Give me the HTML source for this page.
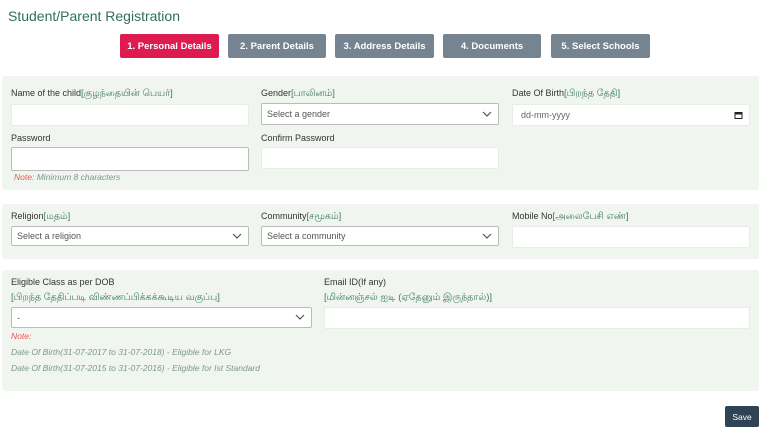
<!DOCTYPE html>
<html><head><meta charset="utf-8"><style>
*{box-sizing:border-box;margin:0;padding:0}
body{width:768px;height:435px;background:#fff;font-family:"Liberation Sans",sans-serif;position:relative;overflow:hidden;color:#333}
.a{position:absolute}
.t{left:8px;top:8px;font-size:14px;color:#2f6f5f}
.b{top:34px;height:24px;border-radius:2px;background:#768491;color:#fff;font-size:9.5px;font-weight:bold;display:flex;align-items:center;justify-content:center}
.p{background:#f1f5ef;left:2px;width:757px;border-radius:3px}
.l{font-size:9px;color:#333;white-space:nowrap}
.l span{color:#3a7a68;font-size:9.5px}
.i{background:#fff;border:1px solid #e8ece6;border-radius:2px;height:22px;font-size:9px;color:#555;padding:0 5px;display:flex;align-items:center}
.s{border-color:#bbb}
.chev{position:absolute;right:6px;top:6px}
.n{font-size:8.5px;font-style:italic;color:#7a9a88;white-space:nowrap}
.n b{color:#e55;font-weight:normal}
</style></head><body>
<div class="a t">Student/Parent Registration</div>
<div class="a b" style="left:120px;width:99px;background:#dd1b50">1. Personal Details</div>
<div class="a b" style="left:228px;width:98px">2. Parent Details</div>
<div class="a b" style="left:335px;width:99px">3. Address Details</div>
<div class="a b" style="left:443px;width:98px">4. Documents</div>
<div class="a b" style="left:551px;width:99px">5. Select Schools</div>

<div class="a p" style="top:76px;height:114px"></div>
<div class="a l" style="left:11px;top:88px">Name of the child<span>[குழந்தையின் பெயர்]</span></div>
<div class="a l" style="left:261px;top:88px">Gender<span>[பாலினம்]</span></div>
<div class="a l" style="left:512px;top:88px">Date Of Birth<span>[பிறந்த தேதி]</span></div>
<div class="a i" style="left:11px;top:104px;width:238px"></div>
<div class="a i s" style="left:261px;top:103px;width:238px">Select a gender<svg class="chev" width="10" height="8" viewBox="0 0 10 8"><path d="M1 2l4 4 4-4" stroke="#555" fill="none" stroke-width="1.2"/></svg></div>
<div class="a i" style="left:512px;top:104px;width:238px;color:#666;padding-left:8px">dd-mm-yyyy<svg class="chev" style="top:6px" width="9" height="9" viewBox="0 0 9 9"><rect x="1" y="1.5" width="7" height="6" fill="none" stroke="#222" stroke-width="1"/><rect x="1" y="1.5" width="7" height="2" fill="#222"/></svg></div>
<div class="a l" style="left:11px;top:133px">Password</div>
<div class="a l" style="left:261px;top:133px">Confirm Password</div>
<div class="a i s" style="left:11px;top:147px;width:238px;height:24px"></div>
<div class="a i" style="left:261px;top:147px;width:238px"></div>
<div class="a n" style="left:14px;top:172px"><b>Note:</b> Minimum 8 characters</div>

<div class="a p" style="top:204px;height:55px"></div>
<div class="a l" style="left:11px;top:211px">Religion<span>[மதம்]</span></div>
<div class="a l" style="left:261px;top:211px">Community<span>[சமூகம்]</span></div>
<div class="a l" style="left:512px;top:211px">Mobile No<span>[அலைபேசி எண்]</span></div>
<div class="a i s" style="left:11px;top:226px;width:238px;height:20px">Select a religion<svg class="chev" style="top:5px" width="10" height="8" viewBox="0 0 10 8"><path d="M1 2l4 4 4-4" stroke="#555" fill="none" stroke-width="1.2"/></svg></div>
<div class="a i s" style="left:261px;top:226px;width:238px;height:20px">Select a community<svg class="chev" style="top:5px" width="10" height="8" viewBox="0 0 10 8"><path d="M1 2l4 4 4-4" stroke="#555" fill="none" stroke-width="1.2"/></svg></div>
<div class="a i" style="left:512px;top:226px;width:238px"></div>

<div class="a p" style="top:270px;height:121px"></div>
<div class="a l" style="left:11px;top:277px">Eligible Class as per DOB</div>
<div class="a l" style="left:11px;top:292px"><span>[பிறந்த தேதிப்படி விண்ணப்பிக்கக்கூடிய வகுப்பு]</span></div>
<div class="a l" style="left:324px;top:277px">Email ID(If any)</div>
<div class="a l" style="left:324px;top:292px"><span>[மின்னஞ்சல் ஐடி (ஏதேனும் இருந்தால்)]</span></div>
<div class="a i s" style="left:11px;top:307px;width:301px;height:21px">-<svg class="chev" style="top:5px" width="10" height="8" viewBox="0 0 10 8"><path d="M1 2l4 4 4-4" stroke="#555" fill="none" stroke-width="1.2"/></svg></div>
<div class="a i" style="left:324px;top:307px;width:426px"></div>
<div class="a n" style="left:11px;top:331px"><b>Note:</b></div>
<div class="a n" style="left:11px;top:347px">Date Of Birth(31-07-2017 to 31-07-2018) - Eligible for LKG</div>
<div class="a n" style="left:11px;top:363px">Date Of Birth(31-07-2015 to 31-07-2016) - Eligible for Ist Standard</div>

<div class="a" style="left:725px;top:406px;width:34px;height:21px;background:#2f4354;color:#fff;font-size:8.5px;border-radius:2px;display:flex;align-items:center;justify-content:center">Save</div>
</body></html>
